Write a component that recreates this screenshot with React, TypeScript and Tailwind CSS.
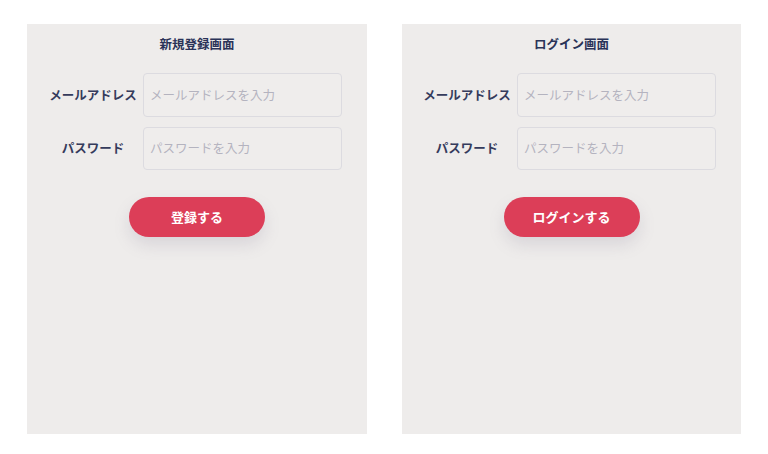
import React from "react";

function Panel({ title, button, narrow }: { title: string; button: string; narrow?: boolean }) {
  return (
    <div className={(narrow ? "w-[339px]" : "w-[340px]") + " h-[410px] bg-[#eeeceb] flex flex-col items-center"}>
      <div className="mt-[12px] h-[16px] flex items-center text-[12.5px] font-bold text-[#2a3358] leading-none">
        {title}
      </div>
      <div className={(narrow ? "pl-[21px]" : "pl-[22px]") + " mt-[21px] flex flex-col gap-[10px] self-start"}>
        <div className="flex items-center gap-[6px]">
          <div className="w-[88px] text-center text-[12.5px] font-semibold text-[#353b5c] whitespace-nowrap">メールアドレス</div>
          <div className="w-[199px] h-[44px] rounded-[4px] border border-[#dcdbe0] bg-[#efedec] flex items-center px-[6px] text-[12.5px] text-[#b4b3bf] whitespace-nowrap">
            メールアドレスを入力
          </div>
        </div>
        <div className="flex items-center gap-[6px]">
          <div className="w-[88px] text-center text-[12.5px] font-semibold text-[#353b5c] whitespace-nowrap">パスワード</div>
          <div className="w-[199px] h-[43px] rounded-[4px] border border-[#dcdbe0] bg-[#efedec] flex items-center px-[6px] text-[12.5px] text-[#b4b3bf] whitespace-nowrap">
            パスワードを入力
          </div>
        </div>
      </div>
      <button className="mt-[27px] w-[136px] h-[40px] rounded-full bg-[#dc3e58] text-white text-[13px] font-bold shadow-[0_8px_16px_rgba(120,110,140,0.18)]">
        {button}
      </button>
    </div>
  );
}

export default function App() {
  return (
    <div
      className="w-[768px] h-[454px] bg-white flex gap-[35px] pl-[27px] pt-[24px]"
      style={{ fontFamily: '"Noto Sans CJK JP", "Noto Sans", sans-serif' }}
    >
      <Panel title="新規登録画面" button="登録する" />
      <Panel title="ログイン画面" button="ログインする" narrow />
    </div>
  );
}
